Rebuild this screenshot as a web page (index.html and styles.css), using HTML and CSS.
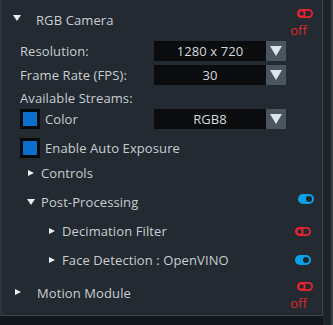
FILE: index.html
```html
<!DOCTYPE html>
<html lang="en">
<head>
  <meta charset="UTF-8">
  <title>RGB Camera</title>
  <link rel="stylesheet" href="styles.css">
</head>
<body>
  <div class="page">
    <div class="panel">
      <div class="header">
        <span class="caret down"></span>
        <span class="title">RGB Camera</span>
        <div class="status">
          <svg class="toggle-off" width="16" height="9" viewBox="0 0 16 9"><rect x="0.9" y="0.9" width="14.2" height="7.2" rx="3.6" fill="none" stroke="#ea2330" stroke-width="1.8"/><circle cx="4.6" cy="4.5" r="3.1" fill="none" stroke="#ea2330" stroke-width="1.8"/></svg>
          <span class="off">off</span>
        </div>
      </div>

      <div class="prop">
        <span class="label">Resolution:</span>
        <div class="combo"><span class="value">1280 x 720</span><span class="arrow"></span></div>
      </div>
      <div class="prop">
        <span class="label">Frame Rate (FPS):</span>
        <div class="combo"><span class="value">30</span><span class="arrow"></span></div>
      </div>
      <div class="prop streams">
        <span class="label">Available Streams:</span>
      </div>
      <div class="prop tight">
        <span class="label"><span class="check"></span>Color</span>
        <div class="combo"><span class="value">RGB8</span><span class="arrow"></span></div>
      </div>
      <div class="prop gap">
        <span class="label"><span class="check"></span>Enable Auto Exposure</span>
      </div>

      <div class="node level1 first">
        <span class="caret right"></span>
        <span class="name">Controls</span>
      </div>
      <div class="node level1">
        <span class="caret down small"></span>
        <span class="name">Post-Processing</span>
        <svg class="toggle-on top" width="16" height="10" viewBox="0 0 16 10"><rect x="0" y="0" width="16" height="10" rx="5" fill="#0aa2e6"/><circle cx="11" cy="5" r="3" fill="#1c242c"/></svg>
      </div>
      <div class="node level2">
        <span class="caret right"></span>
        <span class="name">Decimation Filter</span>
        <svg class="toggle-off" width="16" height="9" viewBox="0 0 16 9"><rect x="0.9" y="0.9" width="14.2" height="7.2" rx="3.6" fill="none" stroke="#ea2330" stroke-width="1.8"/><circle cx="4.6" cy="4.5" r="3.1" fill="none" stroke="#ea2330" stroke-width="1.8"/></svg>
      </div>
      <div class="node level2">
        <span class="caret right"></span>
        <span class="name">Face Detection : OpenVINO</span>
        <svg class="toggle-on" width="16" height="10" viewBox="0 0 16 10"><rect x="0" y="0" width="16" height="10" rx="5" fill="#0aa2e6"/><circle cx="11" cy="5" r="3" fill="#1c242c"/></svg>
      </div>

      <div class="header last">
        <span class="caret right"></span>
        <span class="title">Motion Module</span>
        <div class="status">
          <svg class="toggle-off" width="16" height="9" viewBox="0 0 16 9"><rect x="0.9" y="0.9" width="14.2" height="7.2" rx="3.6" fill="none" stroke="#ea2330" stroke-width="1.8"/><circle cx="4.6" cy="4.5" r="3.1" fill="none" stroke="#ea2330" stroke-width="1.8"/></svg>
          <span class="off">off</span>
        </div>
      </div>
    </div>
    <div class="side"></div>
  </div>
</body>
</html>
```

FILE: styles.css
```css
html, body {
  margin: 0;
  padding: 0;
  background-color: #13171b;
}
body {
  font-family: 'Open Sans', 'DejaVu Sans', sans-serif;
  font-size: 13px;
  color: #c9ced3;
  letter-spacing: 0.1px;
}
.page {
  display: flex;
  width: 333px;
  height: 325px;
}
.panel {
  width: 320px;
  height: 315px;
  background-color: #232a31;
  border-left: 2px solid #2b333b;
  border-right: 1px solid #3c4650;
  border-bottom: 1px solid #3c4650;
}
.side {
  width: 8px;
  height: 325px;
  background-color: #1e242a;
  border-right: 2px solid #3a434c;
}

/* section headers */
.header {
  display: flex;
  align-items: flex-start;
  height: 40px;
  padding-left: 11px;
}
.header .caret {
  margin-top: 15px;
  margin-right: 15px;
}
.header .caret.right {
  margin-top: 16px;
  margin-left: 2px;
  margin-right: 16px;
}
.header .title {
  line-height: 16px;
  padding-top: 12px;
}
.header.last {
  margin-top: 3px;
}
.status {
  margin-left: auto;
  margin-right: 9px;
  display: flex;
  flex-direction: column;
  align-items: flex-end;
  padding-top: 9px;
}
.status .off {
  color: #e0262f;
  line-height: 14px;
  margin-top: 5px;
  margin-right: 6px;
}

/* carets */
.caret {
  display: inline-block;
  width: 0;
  height: 0;
}
.caret.down {
  border-left: 4px solid transparent;
  border-right: 4px solid transparent;
  border-top: 6px solid #e6edf3;
}
.caret.right {
  border-top: 3.5px solid transparent;
  border-bottom: 3.5px solid transparent;
  border-left: 6px solid #e6edf3;
}

/* property rows */
.prop {
  display: flex;
  align-items: center;
  height: 20px;
  margin-top: 4px;
  padding-left: 18px;
}
.header + .prop {
  margin-top: 1px;
}
.prop.streams {
  margin-top: 3px;
}
.prop.tight {
  margin-top: 1px;
}
.prop.gap {
  margin-top: 9px;
}
.label {
  display: flex;
  align-items: center;
  width: 134px;
  white-space: nowrap;
}
.check {
  width: 14px;
  height: 14px;
  border: 3px solid #07090b;
  background-color: #0b6fce;
  margin-right: 5px;
  flex-shrink: 0;
}
.combo {
  display: flex;
  height: 20px;
}
.combo .value {
  width: 112px;
  background-color: #0a0c0e;
  text-align: center;
  line-height: 20px;
  color: #d5dade;
}
.combo .arrow {
  width: 20px;
  background-color: #4a5560;
  position: relative;
}
.combo .arrow::after {
  content: '';
  position: absolute;
  left: 4px;
  top: 5px;
  border-left: 6px solid transparent;
  border-right: 6px solid transparent;
  border-top: 10px solid #dce5ed;
}

/* tree nodes */
.node {
  display: flex;
  align-items: center;
  height: 20px;
  margin-top: 9px;
}
.node.first {
  margin-top: 5px;
}
.node.level1 {
  padding-left: 26px;
}
.node.level2 {
  padding-left: 47px;
}
.node .caret {
  margin-right: 7px;
}
.node .caret.small {
  margin-left: -1px;
  margin-right: 6px;
}
.node svg {
  margin-left: auto;
  margin-right: 11px;
}
.node svg.top {
  margin-right: 8px;
  margin-top: -6px;
}
```
